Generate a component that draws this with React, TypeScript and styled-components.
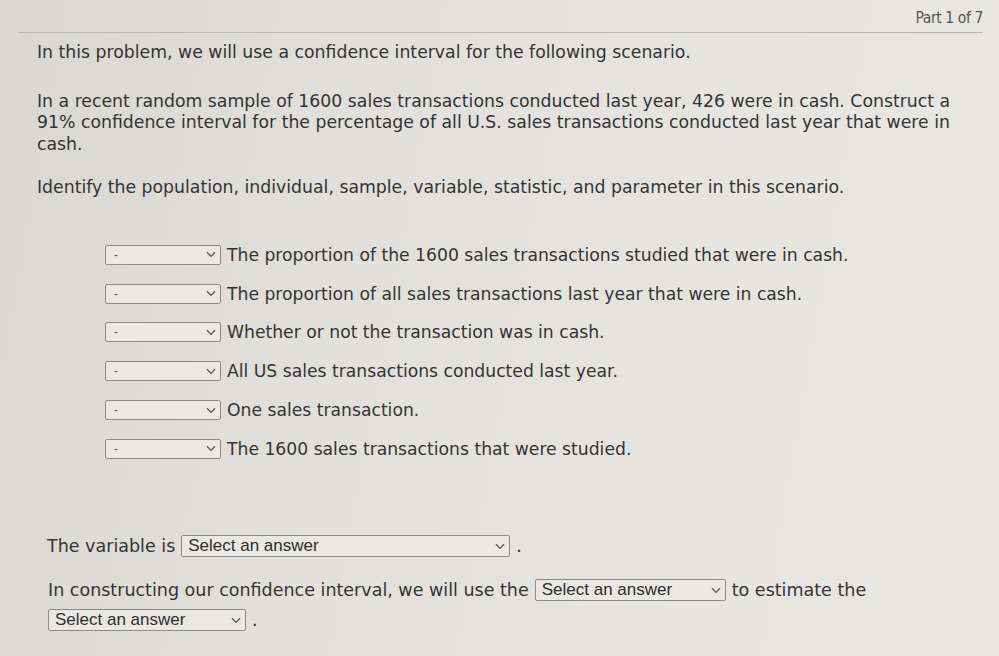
import React from "react";
import styled, { createGlobalStyle } from "styled-components";

const Global = createGlobalStyle`
  html, body { margin: 0; padding: 0; }
  body {
    width: 999px;
    height: 656px;
    overflow: hidden;
    background: linear-gradient(100deg, #d9d7d2 0%, #e2e0dc 35%, #e7e5e1 70%, #e9e7e3 100%);
    font-family: "DejaVu Sans", Verdana, sans-serif;
    color: #343434;
  }
`;

const Page = styled.div`
  margin: 0 16px 0 18px;
  display: flex;
  flex-direction: column;
`;

const Header = styled.div`
  display: flex;
  justify-content: flex-end;
  height: 32px;
  align-items: flex-start;
  border-bottom: 1.5px solid #b9b7b3;
`;

const PartLabel = styled.span`
  font-family: "DejaVu Sans Condensed", "DejaVu Sans", sans-serif;
  font-size: 15.5px;
  color: #555;
  margin-top: 9px;
  letter-spacing: -0.4px;
`;

const Body = styled.div`
  padding: 9px 0 0 19px;
  display: flex;
  flex-direction: column;
`;

const Para = styled.p<{ $mt?: number }>`
  margin: ${(p) => p.$mt ?? 0}px 0 0 0;
  font-size: 17.3px;
  line-height: 21.5px;
  white-space: nowrap;
`;

const Rows = styled.div`
  display: flex;
  flex-direction: column;
  margin: 37px 0 0 68px;
`;

const Row = styled.div`
  display: flex;
  align-items: center;
  height: 38.8px;
  gap: 6px;
  font-size: 17.2px;
`;

const SelectBox = styled.div<{ $w: number; $h?: number }>`
  width: ${(p) => p.$w}px;
  height: ${(p) => p.$h ?? 20}px;
  box-sizing: border-box;
  border: 1px solid #8d8b88;
  border-radius: 2px;
  background: #e9e8e5;
  display: flex;
  align-items: center;
  justify-content: space-between;
  padding: 0 4px 0 6px;
  font-family: "Liberation Sans", Arial, sans-serif;
  font-size: 17px;
  color: #2e2e2e;
  flex-shrink: 0;
`;

const Dash = styled.span`
  font-size: 12px;
  color: #555;
  margin-left: 2px;
`;

const Chevron = () => (
  <svg width="10" height="7" viewBox="0 0 10 7">
    <path d="M1 1.2 L5 5.4 L9 1.2" fill="none" stroke="#555" strokeWidth="1.3" />
  </svg>
);

const Inline = styled.div<{ $mt: number; $pl?: number }>`
  display: flex;
  align-items: center;
  gap: 6px;
  margin-top: ${(p) => p.$mt}px;
  padding-left: ${(p) => p.$pl ?? 0}px;
  font-size: 17.5px;
`;

const rows = [
  "The proportion of the 1600 sales transactions studied that were in cash.",
  "The proportion of all sales transactions last year that were in cash.",
  "Whether or not the transaction was in cash.",
  "All US sales transactions conducted last year.",
  "One sales transaction.",
  "The 1600 sales transactions that were studied.",
];

export default function App() {
  return (
    <>
      <Global />
      <Page>
        <Header>
          <PartLabel>Part 1 of 7</PartLabel>
        </Header>
        <Body>
          <Para>In this problem, we will use a confidence interval for the following scenario.</Para>
          <Para $mt={27}>
            In a recent random sample of 1600 sales transactions conducted last year, 426 were in cash. Construct a
            <br />
            91% confidence interval for the percentage of all U.S. sales transactions conducted last year that were in
            <br />
            cash.
          </Para>
          <Para $mt={22}>Identify the population, individual, sample, variable, statistic, and parameter in this scenario.</Para>
          <Rows>
            {rows.map((t) => (
              <Row key={t}>
                <SelectBox $w={116}>
                  <Dash>-</Dash>
                  <Chevron />
                </SelectBox>
                <span>{t}</span>
              </Row>
            ))}
          </Rows>
          <Inline $mt={67} $pl={10}>
            <span>The variable is</span>
            <SelectBox $w={329} $h={22}>
              <span>Select an answer</span>
              <Chevron />
            </SelectBox>
            <span>.</span>
          </Inline>
          <Inline $mt={22} $pl={11}>
            <span>In constructing our confidence interval, we will use the</span>
            <SelectBox $w={191} $h={22}>
              <span>Select an answer</span>
              <Chevron />
            </SelectBox>
            <span>to estimate the</span>
          </Inline>
          <Inline $mt={8} $pl={11}>
            <SelectBox $w={198} $h={22}>
              <span>Select an answer</span>
              <Chevron />
            </SelectBox>
            <span>.</span>
          </Inline>
        </Body>
      </Page>
    </>
  );
}
